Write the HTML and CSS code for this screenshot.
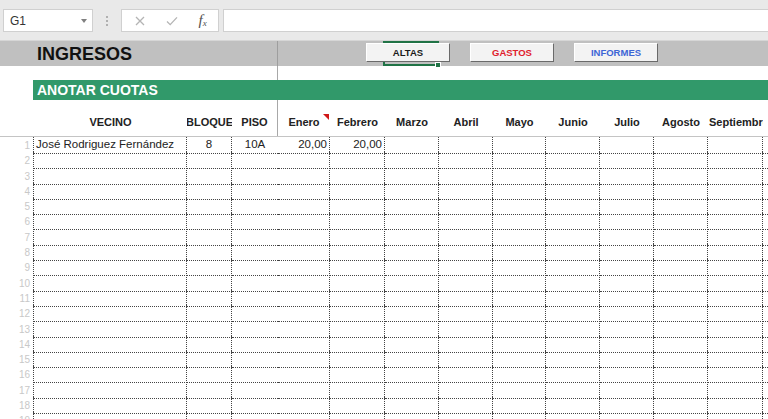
FILE: index.html
```
<!DOCTYPE html>
<html lang="es">
<head>
<meta charset="utf-8">
<title>INGRESOS</title>
<link rel="stylesheet" href="styles.css">
</head>
<body>
<div class="fbar">
  <div class="namebox"><span>G1</span><span class="caret"></span></div>
  <div class="grip"><i></i><i></i><i></i></div>
  <div class="fxbox">
    <span class="slot s1"><svg width="10" height="10" viewBox="0 0 10 10"><path d="M1 1L9 9M9 1L1 9" stroke="#b4b4b4" stroke-width="1.3" fill="none"/></svg></span>
    <span class="slot s2"><svg width="12" height="10" viewBox="0 0 12 10"><path d="M1 5.5L4.2 8.6L11 1.4" stroke="#b4b4b4" stroke-width="1.3" fill="none"/></svg></span>
    <span class="slot s3"><span class="fx">f<sub>x</sub></span></span>
  </div>
  <div class="finput"></div>
</div>

<div class="band">
  <div class="band-left">INGRESOS</div>
  <div class="band-right">
    <div class="selection"><span class="handle"></span></div>
    <div class="btn altas">ALTAS</div>
    <div class="btn gastos">GASTOS</div>
    <div class="btn informes">INFORMES</div>
  </div>
</div>

<div class="gap"><div class="gap-left"></div></div>

<div class="greenbar">ANOTAR CUOTAS</div>

<div class="head">
  <div class="h"></div>
  <div class="h">VECINO</div>
  <div class="h">BLOQUE</div>
  <div class="h freeze">PISO</div>
  <div class="h comment">Enero</div>
  <div class="h">Febrero</div>
  <div class="h">Marzo</div>
  <div class="h">Abril</div>
  <div class="h">Mayo</div>
  <div class="h">Junio</div>
  <div class="h">Julio</div>
  <div class="h">Agosto</div>
  <div class="h clip">Septiembre</div>
  <div class="h"></div>
</div>

<div class="rows">
  <div class="row"><div class="rn">1</div><div class="c name">José Rodriguez Fernández</div><div class="c ctr">8</div><div class="c nb ctr">10A</div><div class="c num">20,00</div><div class="c num">20,00</div><div class="c"></div><div class="c"></div><div class="c"></div><div class="c"></div><div class="c"></div><div class="c"></div><div class="c"></div><div class="c last"></div></div>
  <div class="row"><div class="rn">2</div><div class="c"></div><div class="c"></div><div class="c nb"></div><div class="c"></div><div class="c"></div><div class="c"></div><div class="c"></div><div class="c"></div><div class="c"></div><div class="c"></div><div class="c"></div><div class="c"></div><div class="c last"></div></div>
  <div class="row"><div class="rn">3</div><div class="c"></div><div class="c"></div><div class="c nb"></div><div class="c"></div><div class="c"></div><div class="c"></div><div class="c"></div><div class="c"></div><div class="c"></div><div class="c"></div><div class="c"></div><div class="c"></div><div class="c last"></div></div>
  <div class="row"><div class="rn">4</div><div class="c"></div><div class="c"></div><div class="c nb"></div><div class="c"></div><div class="c"></div><div class="c"></div><div class="c"></div><div class="c"></div><div class="c"></div><div class="c"></div><div class="c"></div><div class="c"></div><div class="c last"></div></div>
  <div class="row"><div class="rn">5</div><div class="c"></div><div class="c"></div><div class="c nb"></div><div class="c"></div><div class="c"></div><div class="c"></div><div class="c"></div><div class="c"></div><div class="c"></div><div class="c"></div><div class="c"></div><div class="c"></div><div class="c last"></div></div>
  <div class="row"><div class="rn">6</div><div class="c"></div><div class="c"></div><div class="c nb"></div><div class="c"></div><div class="c"></div><div class="c"></div><div class="c"></div><div class="c"></div><div class="c"></div><div class="c"></div><div class="c"></div><div class="c"></div><div class="c last"></div></div>
  <div class="row"><div class="rn">7</div><div class="c"></div><div class="c"></div><div class="c nb"></div><div class="c"></div><div class="c"></div><div class="c"></div><div class="c"></div><div class="c"></div><div class="c"></div><div class="c"></div><div class="c"></div><div class="c"></div><div class="c last"></div></div>
  <div class="row"><div class="rn">8</div><div class="c"></div><div class="c"></div><div class="c nb"></div><div class="c"></div><div class="c"></div><div class="c"></div><div class="c"></div><div class="c"></div><div class="c"></div><div class="c"></div><div class="c"></div><div class="c"></div><div class="c last"></div></div>
  <div class="row"><div class="rn">9</div><div class="c"></div><div class="c"></div><div class="c nb"></div><div class="c"></div><div class="c"></div><div class="c"></div><div class="c"></div><div class="c"></div><div class="c"></div><div class="c"></div><div class="c"></div><div class="c"></div><div class="c last"></div></div>
  <div class="row"><div class="rn">10</div><div class="c"></div><div class="c"></div><div class="c nb"></div><div class="c"></div><div class="c"></div><div class="c"></div><div class="c"></div><div class="c"></div><div class="c"></div><div class="c"></div><div class="c"></div><div class="c"></div><div class="c last"></div></div>
  <div class="row"><div class="rn">11</div><div class="c"></div><div class="c"></div><div class="c nb"></div><div class="c"></div><div class="c"></div><div class="c"></div><div class="c"></div><div class="c"></div><div class="c"></div><div class="c"></div><div class="c"></div><div class="c"></div><div class="c last"></div></div>
  <div class="row"><div class="rn">12</div><div class="c"></div><div class="c"></div><div class="c nb"></div><div class="c"></div><div class="c"></div><div class="c"></div><div class="c"></div><div class="c"></div><div class="c"></div><div class="c"></div><div class="c"></div><div class="c"></div><div class="c last"></div></div>
  <div class="row"><div class="rn">13</div><div class="c"></div><div class="c"></div><div class="c nb"></div><div class="c"></div><div class="c"></div><div class="c"></div><div class="c"></div><div class="c"></div><div class="c"></div><div class="c"></div><div class="c"></div><div class="c"></div><div class="c last"></div></div>
  <div class="row"><div class="rn">14</div><div class="c"></div><div class="c"></div><div class="c nb"></div><div class="c"></div><div class="c"></div><div class="c"></div><div class="c"></div><div class="c"></div><div class="c"></div><div class="c"></div><div class="c"></div><div class="c"></div><div class="c last"></div></div>
  <div class="row"><div class="rn">15</div><div class="c"></div><div class="c"></div><div class="c nb"></div><div class="c"></div><div class="c"></div><div class="c"></div><div class="c"></div><div class="c"></div><div class="c"></div><div class="c"></div><div class="c"></div><div class="c"></div><div class="c last"></div></div>
  <div class="row"><div class="rn">16</div><div class="c"></div><div class="c"></div><div class="c nb"></div><div class="c"></div><div class="c"></div><div class="c"></div><div class="c"></div><div class="c"></div><div class="c"></div><div class="c"></div><div class="c"></div><div class="c"></div><div class="c last"></div></div>
  <div class="row"><div class="rn">17</div><div class="c"></div><div class="c"></div><div class="c nb"></div><div class="c"></div><div class="c"></div><div class="c"></div><div class="c"></div><div class="c"></div><div class="c"></div><div class="c"></div><div class="c"></div><div class="c"></div><div class="c last"></div></div>
  <div class="row"><div class="rn">18</div><div class="c"></div><div class="c"></div><div class="c nb"></div><div class="c"></div><div class="c"></div><div class="c"></div><div class="c"></div><div class="c"></div><div class="c"></div><div class="c"></div><div class="c"></div><div class="c"></div><div class="c last"></div></div>
  <div class="row"><div class="rn">19</div><div class="c"></div><div class="c"></div><div class="c nb"></div><div class="c"></div><div class="c"></div><div class="c"></div><div class="c"></div><div class="c"></div><div class="c"></div><div class="c"></div><div class="c"></div><div class="c"></div><div class="c last"></div></div>
</div>
</body>
</html>
```
FILE: styles.css
```
* { box-sizing: border-box; }

html, body {
  margin: 0;
  padding: 0;
}

body {
  width: 768px;
  height: 419px;
  overflow: hidden;
  background: #ffffff;
  font-family: "Liberation Sans", Arial, sans-serif;
  color: #222;
}

/* ---------- formula bar ---------- */
.fbar {
  height: 41px;
  background: #e9e9e9;
  border-bottom: 1px solid #d6d6d6;
  display: flex;
  align-items: flex-start;
  padding: 9px 0 0 3px;
}

.namebox {
  width: 90px;
  height: 23px;
  background: #fff;
  border: 1px solid #d0d0d0;
  display: flex;
  align-items: center;
  justify-content: space-between;
  padding: 0 5px 0 6px;
  font-size: 12px;
  color: #333;
}

.caret {
  width: 0;
  height: 0;
  border-left: 3.5px solid transparent;
  border-right: 3.5px solid transparent;
  border-top: 4px solid #808080;
}

.grip {
  width: 28px;
  height: 23px;
  display: flex;
  flex-direction: column;
  align-items: center;
  justify-content: center;
  gap: 2px;
}

.grip i {
  display: block;
  width: 2px;
  height: 2px;
  background: #b0b0b0;
}

.fxbox {
  width: 98px;
  height: 23px;
  background: #fff;
  border: 1px solid #d0d0d0;
  display: flex;
  align-items: center;
  padding-left: 1px;
}

.slot {
  display: flex;
  align-items: center;
  justify-content: center;
  height: 21px;
}

.s1 { width: 34px; }
.s2 { width: 31px; }
.s3 { width: 31px; }

.fx {
  font-family: "Liberation Serif", "Times New Roman", serif;
  font-style: italic;
  font-size: 15px;
  color: #505050;
  line-height: 1;
}

.fx sub {
  font-size: 9px;
  vertical-align: -1px;
}

.finput {
  flex: 1;
  height: 23px;
  margin-left: 4px;
  background: #fff;
  border: 1px solid #d0d0d0;
  border-right: none;
}

/* ---------- title band ---------- */
.band {
  height: 25px;
  background: #c0c0c0;
  display: flex;
}

.band-left {
  width: 278px;
  border-right: 1px solid #9e9e9e;
  padding-left: 37px;
  font-size: 18px;
  font-weight: bold;
  color: #111;
  line-height: 26px;
}

.band-right {
  flex: 1;
  position: relative;
  display: flex;
  align-items: flex-start;
  padding: 2px 0 0 88px;
  gap: 20px;
}

.selection {
  position: absolute;
  left: 105px;
  top: 0;
  width: 56px;
  height: 25px;
  border: 2px solid #217346;
}

.handle {
  position: absolute;
  right: -4px;
  bottom: -4px;
  width: 6px;
  height: 6px;
  background: #217346;
  border: 1px solid #fff;
}

.btn {
  position: relative;
  z-index: 1;
  width: 84px;
  height: 19px;
  background: #f3f3f3;
  border: 1px solid;
  border-color: #ffffff #6a6a6a #6a6a6a #ffffff;
  display: flex;
  align-items: center;
  justify-content: center;
  font-size: 9.5px;
  font-weight: bold;
}

.altas { color: #1a1a1a; }
.gastos { color: #e0202c; }
.informes { color: #3d66d6; }

/* ---------- spacer and green bar ---------- */
.gap {
  height: 14px;
}

.gap-left {
  width: 278px;
  height: 14px;
  border-right: 1px solid #a8a8a8;
}

.greenbar {
  height: 20px;
  margin-left: 33px;
  background: #31996a;
  color: #fff;
  font-size: 14px;
  font-weight: bold;
  line-height: 21px;
  padding-left: 4px;
}

/* ---------- grid ---------- */
.head,
.row {
  display: grid;
  grid-template-columns: 34px 153px 45px 46px 52px 55px 54px 54px 53px 54px 54px 54px 55px 1fr;
}

.head {
  height: 37px;
  border-bottom: 1px solid #c4c4c4;
}

.h {
  display: flex;
  align-items: flex-end;
  justify-content: center;
  padding-bottom: 7px;
  font-size: 11px;
  font-weight: bold;
  line-height: 13px;
  color: #222;
  white-space: nowrap;
  overflow: hidden;
}

.h.freeze {
  border-right: 1px solid #a8a8a8;
}

.h.comment {
  position: relative;
}

.h.comment::after {
  content: "";
  position: absolute;
  top: 14px;
  right: 1px;
  width: 0;
  height: 0;
  border-top: 6px solid #d01818;
  border-left: 6px solid transparent;
}

.h.clip {
  justify-content: flex-start;
  padding-left: 1px;
}

.row {
  height: 15.3px;
}

.rn {
  border-right: 1px dotted #444;
  text-align: right;
  padding-right: 3px;
  font-size: 10px;
  line-height: 17px;
  color: #c8c8c8;
}

.c {
  border-right: 1px dotted #444;
  border-bottom: 1px dotted #444;
  font-size: 11px;
  line-height: 14px;
  color: #222;
  white-space: nowrap;
  overflow: hidden;
}

.c.nb,
.c.last {
  border-right: none;
}

.c.name {
  padding-left: 2px;
  font-size: 11.5px;
}

.c.ctr {
  text-align: center;
  font-size: 11.5px;
}

.c.num {
  text-align: right;
  padding-right: 2px;
  font-size: 11.5px;
}
```
